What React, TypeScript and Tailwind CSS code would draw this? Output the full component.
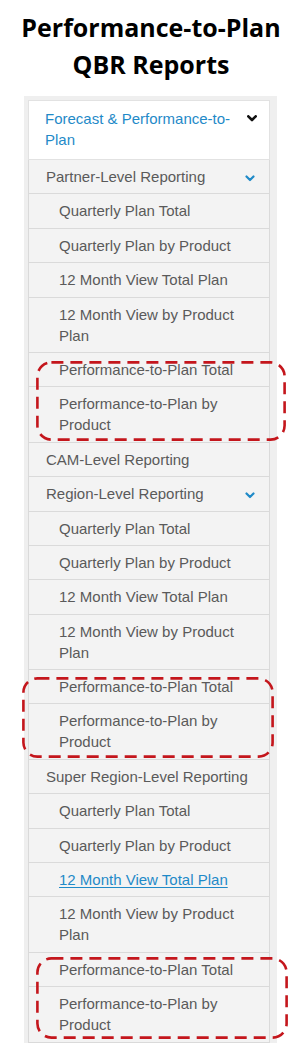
import React from "react";

type Item = { label: string; kind: "top" | "group" | "sub"; chevron?: "black" | "blue"; link?: boolean };

const items: Item[] = [
  { label: "Partner-Level Reporting", kind: "group", chevron: "blue" },
  { label: "Quarterly Plan Total", kind: "sub" },
  { label: "Quarterly Plan by Product", kind: "sub" },
  { label: "12 Month View Total Plan", kind: "sub" },
  { label: "12 Month View by Product Plan", kind: "sub" },
  { label: "Performance-to-Plan Total", kind: "sub" },
  { label: "Performance-to-Plan by Product", kind: "sub" },
  { label: "CAM-Level Reporting", kind: "group" },
  { label: "Region-Level Reporting", kind: "group", chevron: "blue" },
  { label: "Quarterly Plan Total", kind: "sub" },
  { label: "Quarterly Plan by Product", kind: "sub" },
  { label: "12 Month View Total Plan", kind: "sub" },
  { label: "12 Month View by Product Plan", kind: "sub" },
  { label: "Performance-to-Plan Total", kind: "sub" },
  { label: "Performance-to-Plan by Product", kind: "sub" },
  { label: "Super Region-Level Reporting", kind: "group" },
  { label: "Quarterly Plan Total", kind: "sub" },
  { label: "Quarterly Plan by Product", kind: "sub" },
  { label: "12 Month View Total Plan", kind: "sub", link: true },
  { label: "12 Month View by Product Plan", kind: "sub" },
  { label: "Performance-to-Plan Total", kind: "sub" },
  { label: "Performance-to-Plan by Product", kind: "sub" },
];

function Chevron({ color }: { color: "black" | "blue" }) {
  if (color === "black") {
    return (
      <svg width="10" height="7" viewBox="0 0 10 7" className="shrink-0">
        <path d="M1.3 1.3 L5 5 L8.7 1.3" fill="none" stroke="#111" strokeWidth="2.6" strokeLinecap="round" strokeLinejoin="round" />
      </svg>
    );
  }
  return (
    <svg width="10" height="7" viewBox="0 0 10 7" className="shrink-0">
      <path d="M1.5 1.5 L5 5 L8.5 1.5" fill="none" stroke="#1f8ac8" strokeWidth="2.2" strokeLinecap="round" strokeLinejoin="round" />
    </svg>
  );
}

function DashBox({ x, y, w, h }: { x: number; y: number; w: number; h: number }) {
  return (
    <svg
      className="absolute pointer-events-none"
      style={{ left: x, top: y, width: w, height: h }}
      width={w}
      height={h}
      viewBox={`0 0 ${w} ${h}`}
    >
      <rect
        x={1.4}
        y={1.4}
        width={w - 2.8}
        height={h - 2.8}
        rx={14}
        ry={14}
        fill="none"
        stroke="#c4161c"
        strokeWidth={2.6}
        strokeDasharray="12 7"
      />
    </svg>
  );
}

export default function App() {
  return (
    <div className="relative w-[302px] min-h-[1043px] bg-white overflow-hidden">
      <div
        className="pt-[9px] text-center text-[25px] leading-[37px] font-bold text-black"
        style={{ fontFamily: "'Open Sans', Lato, sans-serif" }}
      >
        <div>Performance-to-Plan</div>
        <div>QBR Reports</div>
      </div>

      <div
        className="ml-[24px] mt-[13px] w-[253px] bg-[#efefef] pl-[4px] pr-[7px] pt-[4px] text-[15px] leading-[21px] text-[#5a5a5a]"
        style={{ fontFamily: "'Liberation Sans', Arial, sans-serif" }}
      >
        <div className="flex items-start justify-between border border-[#e2e2e2] bg-white pl-[16px] pr-[12px] pt-[7px] pb-[9px]">
          <span className="w-[195px] text-[#1f8ac8]">Forecast &amp; Performance-to-Plan</span>
          <span className="pt-[7px]">
            <Chevron color="black" />
          </span>
        </div>
        {items.map((it, i) => (
          <div
            key={i}
            className={
              it.kind === "group"
                ? "flex items-start justify-between border-x border-b border-[#dadada] bg-[#f3f3f3] pl-[17px] pr-[14px] pt-[6px] pb-[6.4px]"
                : "flex items-start border-x border-b border-[#dadada] bg-[#f3f3f3] pl-[30px] pr-[12px] pt-[6px] pb-[6.4px]"
            }
          >
            <span className={it.link ? "text-[#1f8ac8] underline underline-offset-2" : ""}>{it.label}</span>
            {it.chevron ? (
              <span className="pt-[9px]">
                <Chevron color={it.chevron} />
              </span>
            ) : null}
          </div>
        ))}
      </div>

      <DashBox x={36} y={361} w={250} h={80} />
      <DashBox x={22} y={677} w={252} h={81} />
      <DashBox x={36} y={957} w={252} h={82} />
    </div>
  );
}
